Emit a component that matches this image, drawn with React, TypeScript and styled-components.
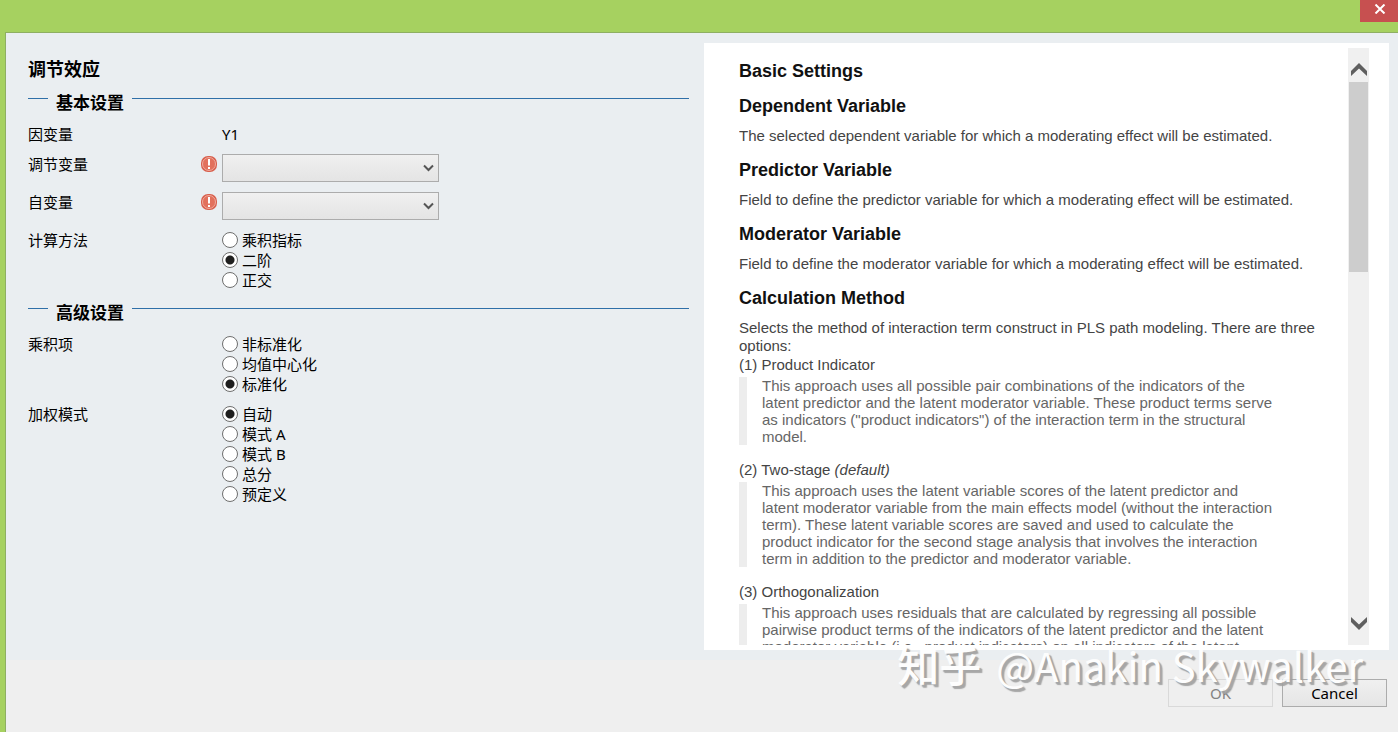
import React, { useState } from 'react';
import styled, { createGlobalStyle, css } from 'styled-components';

const uiFont = '"Noto Sans", "Noto Sans CJK SC", sans-serif';
const helpFont = '"Liberation Sans", Arial, sans-serif';

const GlobalStyle = createGlobalStyle`
  *, *::before, *::after { box-sizing: border-box; }
  body { margin: 0; background: #a6d160; }
  h1, h2, h3, p, blockquote { margin: 0; }
  button, select, input { font: inherit; }
`;

const Window = styled.div`
  display: flex;
  flex-direction: column;
  height: 100vh;
  background: #a6d160;
  color: #000;
  font: 15px/20px ${uiFont};
`;

const TitleBar = styled.header`
  display: flex;
  justify-content: flex-end;
  align-items: flex-start;
  flex: 0 0 32px;
`;

const CloseButton = styled.button`
  display: flex;
  justify-content: center;
  align-items: center;
  width: 38px;
  height: 22px;
  padding: 0 0 4px 2px;
  border: 0;
  background: #c75050;
`;

const Frame = styled.div`
  display: flex;
  flex-direction: column;
  flex: 1;
  min-height: 0;
  margin-left: 5px;
  border: solid #8eaf62;
  border-width: 1px 0 0 1px;
  background: #efefef;
`;

const Content = styled.main`
  display: grid;
  grid-template-columns: minmax(0, 661fr) minmax(0, 685fr);
  grid-template-rows: minmax(0, 1fr);
  gap: 15px;
  flex: 1;
  min-height: 0;
  padding: 10px 9px 10px 22px;
  background: #eaeef1;
`;

const Form = styled.form`
  display: flex;
  flex-direction: column;
  gap: 12px;
  padding-top: 13px;
`;

const FormTitle = styled.h1`
  font: bold 18px/24px "Noto Sans CJK SC", sans-serif;
`;

const Section = styled.section`
  display: flex;
  flex-direction: column;
  gap: 12px;
`;

const SectionTitle = styled.h2`
  display: flex;
  gap: 8px;
  font: bold 17px/20px "Noto Sans CJK SC", sans-serif;

  &::before,
  &::after {
    content: '';
    height: 1px;
    margin-top: 6px;
    background: #2f6fa8;
  }
  &::before { width: 20px; }
  &::after { flex: 1; }
`;

const Rows = styled.div`
  display: flex;
  flex-direction: column;
  gap: 10px;
`;

const rowGrid = css`
  display: grid;
  grid-template-columns: 173px 21px 1fr;
  align-items: start;
`;

const Row = styled.div`
  ${rowGrid}
`;

const Control = styled.div`
  grid-column: 3;
  display: flex;
  flex-direction: column;
  align-items: flex-start;
`;

const ErrorIcon = styled.svg`
  margin-top: 2px;
`;

const SelectBox = styled.div`
  display: grid;
  align-items: center;
  width: 217px;

  & > * { grid-area: 1 / 1; }
  svg { justify-self: end; margin-right: 5px; pointer-events: none; }
`;

const Select = styled.select`
  appearance: none;
  width: 100%;
  height: 28px;
  padding: 0 24px 0 6px;
  border: 1px solid #acacac;
  border-radius: 0;
  background: linear-gradient(#f0f0f0, #e4e4e4);
`;

const RadioLabel = styled.label`
  display: flex;
  align-items: center;
  gap: 4px;
  height: 20px;
`;

const Radio = styled.input`
  appearance: none;
  width: 16px;
  height: 16px;
  margin: 0;
  border: 1px solid #6e6e6e;
  border-radius: 50%;
  background: #fff;

  &:checked {
    background: radial-gradient(circle, #1f1f1f 4px, #fff 5px);
  }
`;

const HelpPanel = styled.aside`
  display: flex;
  padding: 5px 20px 5px 35px;
  background: #fff;
`;

const HelpText = styled.article`
  flex: 1;
  overflow-y: auto;
  scrollbar-width: none;
  padding: 13px 20px 20px 0;
  font: 15px/18px ${helpFont};
  color: #444;
`;

const HelpTitle = styled.h2`
  font-size: 18px;
  line-height: 20px;
  color: #111;
`;

const HelpHeading = styled.h3`
  margin: 15px 0 11px;
  font-size: 18px;
  line-height: 20px;
  color: #111;
`;

const Method = styled.section`
  margin: 1px 0 16px;
  line-height: 17px;
`;

const Quote = styled.blockquote`
  margin: 4px 53px 0 0;
  padding-left: 15px;
  border-left: 8px solid #ededed;
  color: #666;
`;

const ScrollBar = styled.div`
  display: flex;
  flex-direction: column;
  align-items: center;
  width: 21px;
  background: #f0f0f0;
`;

const ScrollButton = styled.button<{ $down?: boolean }>`
  display: flex;
  justify-content: center;
  align-items: flex-end;
  width: 21px;
  height: 34px;
  padding: ${(p) => (p.$down ? '0 0 15px' : '0 0 6px')};
  border: 0;
  background: none;
`;

const ScrollTrack = styled.div`
  flex: 1;
  width: 19px;
`;

const ScrollThumb = styled.div`
  height: 36%;
  background: #cdcdcd;
`;

const Footer = styled.footer`
  position: relative;
  display: flex;
  justify-content: flex-end;
  gap: 9px;
  padding: 19px 11px 25px;
`;

const DialogButton = styled.button`
  width: 105px;
  height: 28px;
  padding: 0;
  border: 1px solid #acacac;
  background: linear-gradient(#f0f0f0, #e5e5e5);
  color: #000;

  &:disabled {
    border-color: #d9d9d9;
    background: #efefef;
    color: #838383;
  }
`;

const Watermark = styled.div`
  position: absolute;
  right: 35px;
  bottom: 40px;
  display: flex;
  align-items: baseline;
  gap: 15px;
  font: 40px/54px "Noto Sans CJK SC", sans-serif;
  color: #fff;
  opacity: 0.9;
  text-shadow: 2px 2px 1px #a0a0a0, 3px 3px 1px #a0a0a0;
  white-space: nowrap;
  pointer-events: none;
`;

const SiteName = styled.span`
  font-size: 42px;
  font-weight: 500;
`;

function ErrorMark() {
  return (
    <ErrorIcon width="16" height="16" viewBox="0 0 16 16" role="img" aria-label="必填">
      <rect width="16" height="16" rx="7" fill="#d8604e" />
      <circle cx="8" cy="8" r="6.500" fill="#e2705c" stroke="#f0ab9e" />
      <path d="M7 3h2v6.500H7zM7 11h2v2H7z" fill="#fff" />
    </ErrorIcon>
  );
}

function VariableSelect({ id, label }: { id: string; label: string }) {
  return (
    <Row>
      <label htmlFor={id}>{label}</label>
      <ErrorMark />
      <SelectBox>
        <Select id={id} defaultValue="">
          <option value="" />
        </Select>
        <svg width="11" height="8" viewBox="0 0 11 8" aria-hidden="true">
          <path d="M1 1.500l4.500 4.500L10 1.500" fill="none" stroke="#555" strokeWidth="2" />
        </svg>
      </SelectBox>
    </Row>
  );
}

interface RadioRowProps {
  name: string;
  label: string;
  options: string[];
  initial: string;
}

function RadioRow({ name, label, options, initial }: RadioRowProps) {
  const [value, setValue] = useState(initial);
  return (
    <Row role="radiogroup" aria-labelledby={`${name}-label`}>
      <span id={`${name}-label`}>{label}</span>
      <Control>
        {options.map((option) => (
          <RadioLabel key={option}>
            <Radio type="radio" name={name} checked={value === option} onChange={() => setValue(option)} />
            {option}
          </RadioLabel>
        ))}
      </Control>
    </Row>
  );
}

export default function App() {
  return (
    <Window>
      <GlobalStyle />
      <TitleBar>
        <CloseButton aria-label="Close">
          <svg width="12" height="10" viewBox="0 0 12 10" aria-hidden="true">
            <path d="M1.500 .5l9 9M10.500 .5l-9 9" stroke="#fff" strokeWidth="2" />
          </svg>
        </CloseButton>
      </TitleBar>
      <Frame>
        <Content>
          <Form>
            <FormTitle>调节效应</FormTitle>
            <Section>
              <SectionTitle>基本设置</SectionTitle>
              <Rows>
                <Row>
                  <span>因变量</span>
                  <Control>Y1</Control>
                </Row>
                <VariableSelect id="moderator" label="调节变量" />
                <VariableSelect id="predictor" label="自变量" />
                <RadioRow name="method" label="计算方法" options={['乘积指标', '二阶', '正交']} initial="二阶" />
              </Rows>
            </Section>
            <Section>
              <SectionTitle>高级设置</SectionTitle>
              <Rows>
                <RadioRow name="product" label="乘积项" options={['非标准化', '均值中心化', '标准化']} initial="标准化" />
                <RadioRow
                  name="weighting"
                  label="加权模式"
                  options={['自动', '模式 A', '模式 B', '总分', '预定义']}
                  initial="自动"
                />
              </Rows>
            </Section>
          </Form>
          <HelpPanel>
            <HelpText>
              <HelpTitle>Basic Settings</HelpTitle>
              <HelpHeading>Dependent Variable</HelpHeading>
              <p>The selected dependent variable for which a moderating effect will be estimated.</p>
              <HelpHeading>Predictor Variable</HelpHeading>
              <p>Field to define the predictor variable for which a moderating effect will be estimated.</p>
              <HelpHeading>Moderator Variable</HelpHeading>
              <p>Field to define the moderator variable for which a moderating effect will be estimated.</p>
              <HelpHeading>Calculation Method</HelpHeading>
              <p>
                Selects the method of interaction term construct in PLS path modeling. There are three options:
              </p>
              <Method>
                <p>(1) Product Indicator</p>
                <Quote>
                  This approach uses all possible pair combinations of the indicators of the latent predictor and the
                  latent moderator variable. These product terms serve as indicators ("product indicators") of the
                  interaction term in the structural model.
                </Quote>
              </Method>
              <Method>
                <p>
                  (2) Two-stage <em>(default)</em>
                </p>
                <Quote>
                  This approach uses the latent variable scores of the latent predictor and latent moderator variable
                  from the main effects model (without the interaction term). These latent variable scores are saved
                  and used to calculate the product indicator for the second stage analysis that involves the
                  interaction term in addition to the predictor and moderator variable.
                </Quote>
              </Method>
              <Method>
                <p>(3) Orthogonalization</p>
                <Quote>
                  This approach uses residuals that are calculated by regressing all possible pairwise product terms of
                  the indicators of the latent predictor and the latent moderator variable (i.e., product indicators)
                  on all indicators of the latent predictor and the latent moderator variable.
                </Quote>
              </Method>
            </HelpText>
            <ScrollBar>
              <ScrollButton aria-label="Scroll up">
                <svg width="16" height="13" viewBox="0 0 16 13" aria-hidden="true">
                  <path d="M0 8L8 0l8 8v5L8 5.500 0 13z" fill="#5f5f5f" />
                </svg>
              </ScrollButton>
              <ScrollTrack>
                <ScrollThumb />
              </ScrollTrack>
              <ScrollButton $down aria-label="Scroll down">
                <svg width="16" height="13" viewBox="0 0 16 13" aria-hidden="true">
                  <path d="M0 5l8 8 8-8V0L8 7.500 0 0z" fill="#5f5f5f" />
                </svg>
              </ScrollButton>
            </ScrollBar>
          </HelpPanel>
        </Content>
        <Footer>
          <DialogButton disabled>OK</DialogButton>
          <DialogButton>Cancel</DialogButton>
          <Watermark>
            <SiteName>知乎</SiteName>
            <span>@Anakin Skywalker</span>
          </Watermark>
        </Footer>
      </Frame>
    </Window>
  );
}
